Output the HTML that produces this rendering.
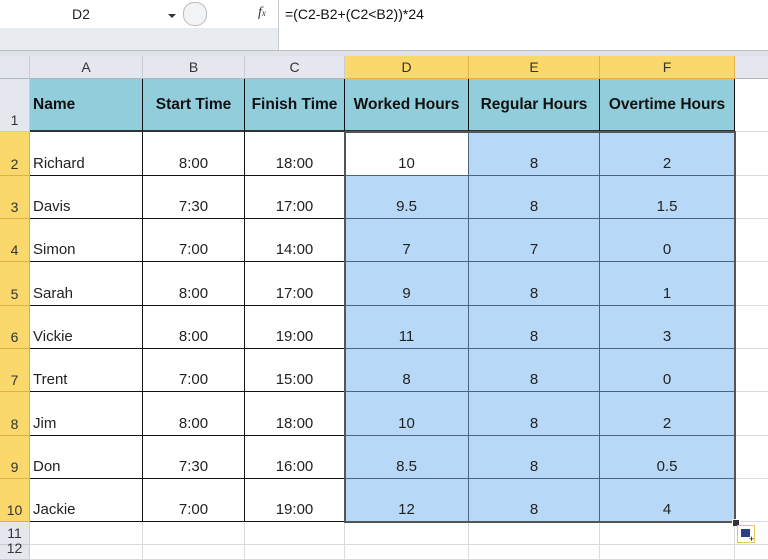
<!DOCTYPE html><html><head><style>
body{margin:0;width:768px;height:552px;overflow:hidden;background:#fff;font-family:"Liberation Sans",sans-serif;position:relative}
.a{position:absolute}
.c{position:absolute;box-sizing:border-box;font-size:15px;color:#222;display:flex;align-items:flex-end;padding-bottom:3px}
.h{font-weight:bold;align-items:center;padding:0;font-size:15.5px;color:#111;white-space:nowrap}
.ch{position:absolute;top:56px;height:23px;box-sizing:border-box;border-right:1px solid #c8cdd4;border-bottom:1px solid #b0b6be;background:#e4e8ee;font-size:14px;color:#333;text-align:center;line-height:23px}
.rh{position:absolute;left:0;width:30px;box-sizing:border-box;background:#fbd86c;border-bottom:1px solid #d9b04a;border-right:1px solid #d9b04a;font-size:14px;color:#333;text-align:center;display:flex;align-items:flex-end;justify-content:center;padding-bottom:3px}
</style></head><body>
<div class="a" style="left:0;top:0;width:768px;height:56px;background:#dfe3e8"></div>
<div class="a" style="left:0;top:0;width:768px;height:28px;background:#fff"></div>
<div class="a" style="left:0;top:28px;width:278px;height:22px;background:#e8ebef"></div>
<div class="a" style="left:278px;top:0;width:490px;height:50px;background:#fff;border-left:1px solid #c6cbd1"></div>
<div class="a" style="left:0;top:50px;width:768px;height:1px;background:#b8bec6"></div>
<div class="a" style="left:72px;top:6px;font-size:14px;color:#222">D2</div>
<div class="a" style="left:168px;top:14px;width:0;height:0;border-left:4px solid transparent;border-right:4px solid transparent;border-top:4px solid #333"></div>
<div class="a" style="left:183px;top:2px;width:22px;height:22px;border-radius:11px;border:1px solid #bbb;background:#f2f3f5"></div>
<div class="a" style="left:258px;top:5px;font-size:14px;font-style:italic;font-family:'Liberation Serif',serif;color:#333">f<span style="font-size:9px">x</span></div>
<div class="a" style="left:285px;top:6px;font-size:14px;color:#111">=(C2-B2+(C2&lt;B2))*24</div>

<div class="ch" style="left:0;width:30px;background:#e4e8ee"></div>
<div class="ch" style="left:30px;width:113px">A</div>
<div class="ch" style="left:143px;width:102px">B</div>
<div class="ch" style="left:245px;width:100px">C</div>
<div class="ch" style="left:345px;width:124px;background:#fbd86c;border-color:#e0b44a">D</div>
<div class="ch" style="left:469px;width:131px;background:#fbd86c;border-color:#e0b44a">E</div>
<div class="ch" style="left:600px;width:135px;background:#fbd86c;border-color:#e0b44a">F</div>
<div class="ch" style="left:735px;width:33px;border-right:none"></div>

<div id="g"></div>
<script>
var X=[30,143,245,345,469,600,735],Y=[79,132,176,219,262,306,349,392,436,479,522,545,560];
var data=[["Name","Start Time","Finish Time","Worked Hours","Regular Hours","Overtime Hours"],
["Richard","8:00","18:00","10","8","2"],["Davis","7:30","17:00","9.5","8","1.5"],["Simon","7:00","14:00","7","7","0"],["Sarah","8:00","17:00","9","8","1"],["Vickie","8:00","19:00","11","8","3"],["Trent","7:00","15:00","8","8","0"],["Jim","8:00","18:00","10","8","2"],["Don","7:30","16:00","8.5","8","0.5"],["Jackie","7:00","19:00","12","8","4"]];
var h="";
for(var r=0;r<12;r++){var y=Y[r],ht=Y[r+1]-Y[r];
 h+='<div class="rh" style="top:'+y+'px;height:'+ht+'px;'+(r==0||r>=10?'background:#e4e8ee;border-color:#c8cdd4':'')+'">'+(r+1)+'</div>';
 for(var c=0;c<6;c++){var x=X[c],w=X[c+1]-X[c];
  if(r<10){var hd=r==0,bg=hd?'#92cddc':(r>=1&&c>=3&&!(r==1&&c==3)?'#b7d9f7':'#fff');
   var bc=(c>=3&&r>0)?'#4a6480':'#111';
   h+='<div class="c'+(hd?' h':'')+'" style="left:'+x+'px;top:'+y+'px;width:'+w+'px;height:'+ht+'px;background:'+bg+';border-right:1px solid '+bc+';border-bottom:'+(hd?'2px solid #333':'1px solid '+bc)+';justify-content:'+(c==0?'flex-start':'center')+';padding-left:'+(c==0?'3px':'0')+'">'+data[r][c]+'</div>';
  } else h+='<div class="a" style="left:'+x+'px;top:'+y+'px;width:'+w+'px;height:'+ht+'px;box-sizing:border-box;border-right:1px solid #d8dce0;border-bottom:1px solid #d8dce0"></div>';
 }
 h+='<div class="a" style="left:735px;top:'+y+'px;width:33px;height:'+ht+'px;box-sizing:border-box;border-bottom:1px solid #d8dce0"></div>';
}
h+='<div class="a" style="left:344px;top:131px;width:392px;height:392px;box-sizing:border-box;border:2px solid #555"></div>';
h+='<div class="a" style="left:732px;top:519px;width:6px;height:6px;background:#333;border:1px solid #fff"></div>';
h+='<div class="a" style="left:737px;top:525px;width:18px;height:18px;box-sizing:border-box;border:1px solid #e8c85a;background:#fff"><div class="a" style="left:3px;top:3px;width:9px;height:8px;background:#2a3e8a"></div><div class="a" style="left:11px;top:9px;font-size:9px;line-height:9px;color:#000">+</div></div>';
document.getElementById('g').innerHTML=h;
</script>
</body></html>
